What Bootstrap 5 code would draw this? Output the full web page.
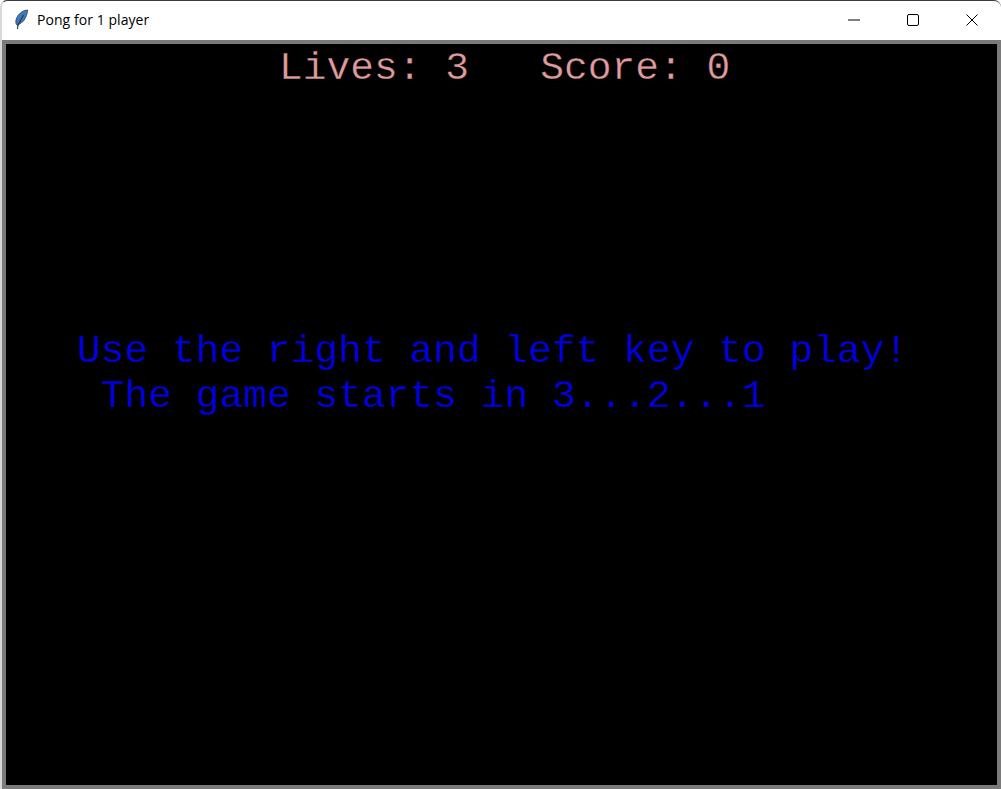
<!DOCTYPE html>
<html lang="en">
<head>
  <meta charset="UTF-8">
  <title>Pong for 1 player</title>
  <link href="https://cdn.jsdelivr.net/npm/bootstrap@5.3.2/dist/css/bootstrap.min.css" rel="stylesheet">
  <style>
    html, body { height: 789px; overflow: hidden; }
    body { background: #fff; }
    .app-window { height: 789px; border-top: 1px solid #3c3c3c; border-left: 2px solid #d8d8d8; border-radius: 7px 7px 0 0; }
    .title-bar { height: 39px; padding: 0 0 2px 12px; font: 14px "Open Sans", "Noto Sans", sans-serif; letter-spacing: 0.06px; color: #000; }
    .win-btn { width: 59px; height: 37px; }
    .game-canvas { background: #000; border: 4px solid #7a7a7a; padding-top: 3px; font-family: "Liberation Mono", "Courier New", monospace; font-size: 39.6px; -webkit-text-stroke: 0.35px #000; }
    .score-line { color: #e09c9c; padding-left: 273px; line-height: 44px; white-space: pre; }
    .help-lines { color: #0000e6; margin-top: 238px; line-height: 45px; padding-left: 71px; white-space: pre; }
  </style>
</head>
<body>

<div class="app-window d-flex flex-column">
  <div class="title-bar d-flex align-items-center">
    <svg width="15" height="21" viewBox="0 0 15 21" class="me-2">
      <path d="M13.500 1C8 1.500 3.500 5.500 2 11C1.500 13.500 2 15.500 3.500 16.500L9.500 12C12 8.500 13.500 4.500 13.500 1Z" fill="#3a7cc4" stroke="#28374d" stroke-width="0.8"/>
      <path d="M9.500 6L4 16L3.500 20" fill="none" stroke="#2a3340" stroke-width="1.100"/>
    </svg>
    <span>Pong for 1 player</span>
    <div class="ms-auto d-flex">
      <div class="win-btn d-flex align-items-center justify-content-center">
        <svg width="12" height="12" viewBox="0 0 12 12"><path d="M0 6H12" stroke="#000" stroke-width="1"/></svg>
      </div>
      <div class="win-btn d-flex align-items-center justify-content-center">
        <svg width="12" height="12" viewBox="0 0 12 12"><rect x="0.500" y="0.500" width="11" height="11" rx="1.500" fill="none" stroke="#000"/></svg>
      </div>
      <div class="win-btn d-flex align-items-center justify-content-center">
        <svg width="12" height="12" viewBox="0 0 12 12"><path d="M0.500 0.500L11.500 11.500M11.500 0.500L0.500 11.500" stroke="#000" stroke-width="1"/></svg>
      </div>
    </div>
  </div>
  <div class="game-canvas flex-grow-1">
    <div class="score-line">Lives: 3   Score: 0</div>
    <div class="help-lines">Use the right and left key to play!
 The game starts in 3...2...1</div>
  </div>
</div>

<script src="https://cdn.jsdelivr.net/npm/bootstrap@5.3.2/dist/js/bootstrap.bundle.min.js"></script>
</body>
</html>
